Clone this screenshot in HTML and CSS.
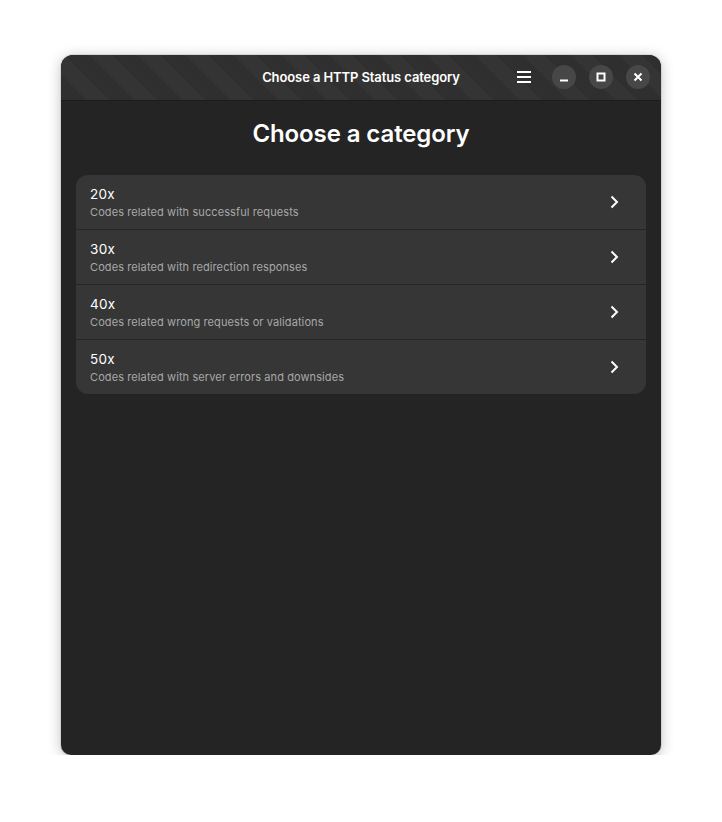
FILE: index.html
```html
<!doctype html>
<html lang="en">
<head>
    <meta charset="UTF-8">
    <meta name="viewport" content="width=device-width, initial-scale=1.0">
    <title>HTTP Status</title>
    <link rel="stylesheet" href="styles.css">
</head>
<body>
    <div class="window">
        <!-- Header bar -->
        <div class="headerbar">
            <div class="title">Choose a HTTP Status category</div>
            <div class="controls">
                <div class="menu">
                    <svg width="16" height="16" viewBox="0 0 16 16"><path d="M1 3h14M1 8h14M1 13h14" stroke="#fff" stroke-width="2"/></svg>
                </div>
                <div class="wbtn">
                    <svg width="10" height="10" viewBox="0 0 10 10"><path d="M1 8.5h8" stroke="#fff" stroke-width="2"/></svg>
                </div>
                <div class="wbtn">
                    <svg width="10" height="10" viewBox="0 0 10 10"><rect x="1.5" y="1.5" width="7" height="7" fill="none" stroke="#fff" stroke-width="2"/></svg>
                </div>
                <div class="wbtn">
                    <svg width="10" height="10" viewBox="0 0 10 10"><path d="M1.5 1.5l7 7M8.5 1.5l-7 7" stroke="#fff" stroke-width="2"/></svg>
                </div>
            </div>
        </div>

        <!-- Content -->
        <div class="content">
            <h1>Choose a category</h1>
            <div class="list">
                <div class="row">
                    <div class="text">
                        <div class="code">20x</div>
                        <div class="desc">Codes related with successful requests</div>
                    </div>
                    <svg class="chev" width="16" height="16" viewBox="0 0 16 16"><path d="M5.5 2.5l5.5 5.5-5.5 5.5" fill="none" stroke="#fff" stroke-width="2"/></svg>
                </div>
                <div class="row">
                    <div class="text">
                        <div class="code">30x</div>
                        <div class="desc">Codes related with redirection responses</div>
                    </div>
                    <svg class="chev" width="16" height="16" viewBox="0 0 16 16"><path d="M5.5 2.5l5.5 5.5-5.5 5.5" fill="none" stroke="#fff" stroke-width="2"/></svg>
                </div>
                <div class="row">
                    <div class="text">
                        <div class="code">40x</div>
                        <div class="desc">Codes related wrong requests or validations</div>
                    </div>
                    <svg class="chev" width="16" height="16" viewBox="0 0 16 16"><path d="M5.5 2.5l5.5 5.5-5.5 5.5" fill="none" stroke="#fff" stroke-width="2"/></svg>
                </div>
                <div class="row">
                    <div class="text">
                        <div class="code">50x</div>
                        <div class="desc">Codes related with server errors and downsides</div>
                    </div>
                    <svg class="chev" width="16" height="16" viewBox="0 0 16 16"><path d="M5.5 2.5l5.5 5.5-5.5 5.5" fill="none" stroke="#fff" stroke-width="2"/></svg>
                </div>
            </div>
        </div>
    </div>
</body>
</html>
```

FILE: styles.css
```css
body {
    margin: 0;
    font-family: Inter, "Noto Sans", sans-serif;
    background-color: #fff;
    color: #fff;
    padding: 55px 0 0 61px;
}
.window {
    width: 600px;
    height: 700px;
    background: #242424;
    border-radius: 12px 12px 10px 10px;
    box-shadow: 0 2px 14px rgba(0, 0, 0, 0.25), 0 0 0 1px rgba(0, 0, 0, 0.08);
    overflow: hidden;
    display: flex;
    flex-direction: column;
}
.headerbar {
    height: 45px;
    border-bottom: 1px solid #1c1c1c;
    background: repeating-linear-gradient(45deg, #2f2f2f 0 18px, #343434 18px 34px);
    display: flex;
    align-items: center;
    justify-content: center;
    position: relative;
}
.title {
    font-size: 13px;
    font-weight: 600;
    letter-spacing: -0.1px;
    padding-bottom: 1px;
}
.controls {
    position: absolute;
    right: 11px;
    top: 10px;
    display: flex;
    align-items: center;
    gap: 13px;
}
.menu {
    width: 24px;
    height: 24px;
    display: flex;
    justify-content: center;
    align-items: center;
    margin-right: 3px;
}
.wbtn {
    width: 24px;
    height: 24px;
    border-radius: 50%;
    background: #474747;
    display: flex;
    justify-content: center;
    align-items: center;
}
.content {
    padding: 0 15px;
}
h1 {
    margin: 18px 0 27px;
    font-size: 24px;
    font-weight: 600;
    text-align: center;
    letter-spacing: -0.1px;
}
.list {
    background: #363636;
    border-radius: 12px;
    overflow: hidden;
}
.row {
    box-sizing: border-box;
    height: 55px;
    display: flex;
    align-items: center;
    justify-content: space-between;
    padding: 0 24px 0 14px;
    border-top: 1px solid #262626;
}
.row:first-child {
    border-top: none;
    height: 54px;
}
.code {
    font-size: 13.5px;
    letter-spacing: 0.3px;
    margin-bottom: 3px;
}
.desc {
    font-size: 11px;
    color: #a8a8a8;
    letter-spacing: 0.1px;
}
```
